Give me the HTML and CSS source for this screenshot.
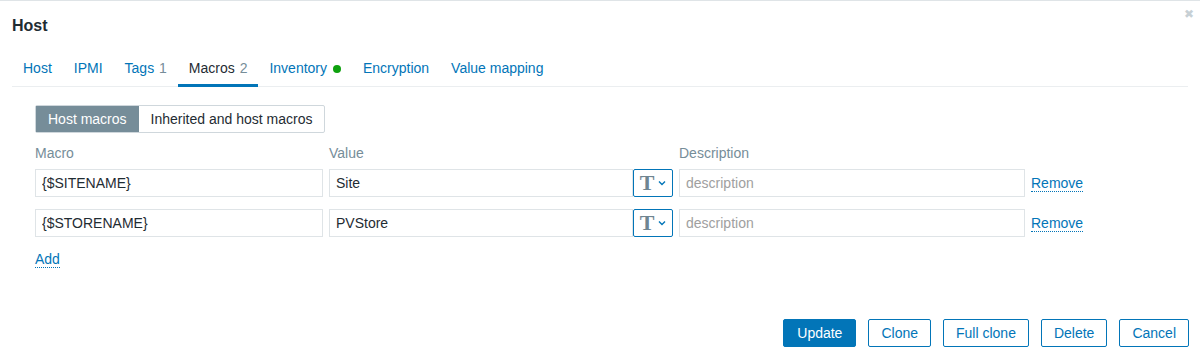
FILE: index.html
```html
<!DOCTYPE html>
<html>
<head lang="en">
    <meta charset="UTF-8">
    <title>Host</title>
    <link rel="stylesheet" href="styles.css">
</head>
<body>
    <div class="dialog">
        <div class="head">
            <h4>Host</h4>
            <span class="close">&#10006;</span>
        </div>

        <ul class="tabs">
            <li><a href="#">Host</a></li>
            <li><a href="#">IPMI</a></li>
            <li><a href="#">Tags <sup>1</sup></a></li>
            <li class="active"><a href="#">Macros <sup>2</sup></a></li>
            <li><a href="#">Inventory <i class="dot"></i></a></li>
            <li><a href="#">Encryption</a></li>
            <li><a href="#">Value mapping</a></li>
        </ul>

        <div class="content">
            <div class="segmented">
                <span class="seg on">Host macros</span>
                <span class="seg">Inherited and host macros</span>
            </div>

            <div class="macros">
                <div class="lbl">Macro</div>
                <div class="lbl">Value</div>
                <div class="lbl">Description</div>
                <div></div>

                <input class="field" type="text" value="{$SITENAME}">
                <div class="value">
                    <input class="field" type="text" value="Site">
                    <button class="type"><span class="t">T</span><svg width="8" height="6" viewBox="0 0 8 6"><path d="M1 1.5 4 4.5 7 1.5" fill="none" stroke="#0275b8" stroke-width="1.4"/></svg></button>
                </div>
                <input class="field" type="text" placeholder="description">
                <a class="link" href="#">Remove</a>

                <input class="field" type="text" value="{$STORENAME}">
                <div class="value">
                    <input class="field" type="text" value="PVStore">
                    <button class="type"><span class="t">T</span><svg width="8" height="6" viewBox="0 0 8 6"><path d="M1 1.5 4 4.5 7 1.5" fill="none" stroke="#0275b8" stroke-width="1.4"/></svg></button>
                </div>
                <input class="field" type="text" placeholder="description">
                <a class="link" href="#">Remove</a>
            </div>

            <a class="link add" href="#">Add</a>
        </div>

        <div class="footer">
            <button class="btn primary">Update</button>
            <button class="btn">Clone</button>
            <button class="btn">Full clone</button>
            <button class="btn">Delete</button>
            <button class="btn">Cancel</button>
        </div>
    </div>
</body>
</html>
```

FILE: styles.css
```css
* {
    padding: 0;
    margin: 0;
    list-style: none;
    box-sizing: border-box;
}
body {
    font-family: "Liberation Sans", Arial, sans-serif;
    font-size: 14px;
    color: #1f2c33;
    background-color: #fff;
}
a {
    color: #0275b8;
    text-decoration: none;
}
.dialog {
    height: 355px;
    border-top: 1px solid #dfe4e7;
    padding: 0 12px;
}
.head {
    display: flex;
    justify-content: space-between;
    padding-top: 14px;
    height: 49px;
}
.head h4 {
    font-size: 16px;
    font-weight: bold;
    line-height: 22px;
}
.close {
    color: #c7d0d5;
    font-size: 12px;
    line-height: 14px;
    margin-top: -8px;
    margin-right: -6px;
}
.tabs {
    display: flex;
    border-bottom: 1px solid #ebeef0;
}
.tabs li {
    padding: 9px 11px 7px;
    line-height: 18px;
    border-bottom: 3px solid transparent;
    margin-bottom: -1px;
}
.tabs li.active {
    border-bottom-color: #0275b8;
}
.tabs li.active a {
    color: #1f2c33;
}
.tabs sup {
    vertical-align: baseline;
    font-size: 14px;
    color: #768d99;
    margin-left: 1px;
}
.dot {
    display: inline-block;
    width: 8px;
    height: 8px;
    border-radius: 50%;
    background-color: #0ea10e;
    margin-left: 2px;
}
.content {
    padding: 18px 0 0 23px;
}
.segmented {
    display: inline-flex;
    height: 28px;
    border: 1px solid #cfd7dc;
    border-radius: 2px;
}
.seg {
    padding: 0 12px;
    line-height: 26px;
}
.seg.on {
    background-color: #768d99;
    color: #fff;
}
.macros {
    display: grid;
    grid-template-columns: 288px 344px 346px auto;
    column-gap: 6px;
    row-gap: 12px;
    align-items: center;
    margin-top: 11px;
}
.lbl {
    color: #768d99;
    line-height: 18px;
    margin-bottom: -5px;
}
.field {
    height: 28px;
    border: 1px solid #dfe4e7;
    padding: 0 6px;
    font-family: inherit;
    font-size: 14px;
    color: #1f2c33;
    background-color: #fff;
    width: 100%;
    outline: none;
}
.field::placeholder {
    color: #a0a0a0;
}
.value {
    display: flex;
}
.type {
    flex: none;
    width: 40px;
    height: 28px;
    border: 1px solid #0275b8;
    border-radius: 2px;
    background-color: #fff;
    display: flex;
    align-items: center;
    justify-content: center;
    gap: 4px;
}
.type .t {
    font-family: "Liberation Serif", serif;
    font-size: 22px;
    font-weight: bold;
    color: #6f8591;
    line-height: 20px;
}
.link {
    justify-self: start;
    border-bottom: 1px dotted #0275b8;
    line-height: 16px;
}
.add {
    display: inline-block;
    margin-top: 14px;
}
.footer {
    display: flex;
    justify-content: flex-end;
    gap: 12px;
    margin-top: 51px;
    margin-right: -1px;
}
.btn {
    height: 28px;
    padding: 0 12px;
    border: 1px solid #0275b8;
    border-radius: 2px;
    background-color: #fff;
    color: #0275b8;
    font-family: inherit;
    font-size: 14px;
}
.btn.primary {
    background-color: #0275b8;
    color: #fff;
    padding: 0 13px;
}
```
